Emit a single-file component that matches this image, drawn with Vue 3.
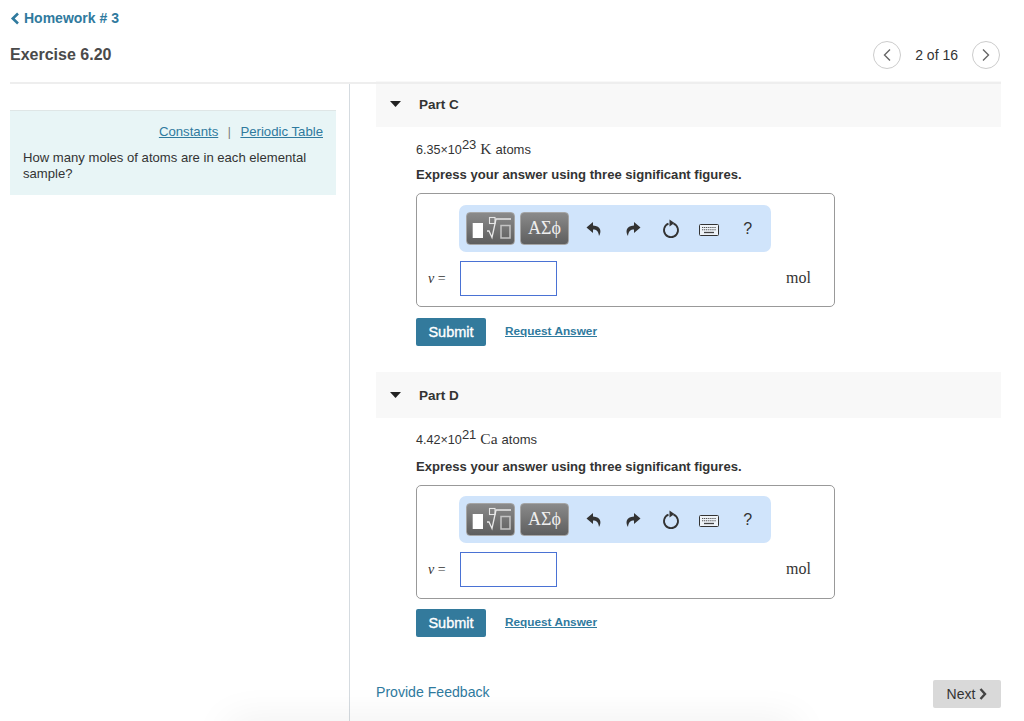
<script setup>
const parts = [
  { name: 'Part C', mantissa: '6.35×10', exp: '23', el: 'K' },
  { name: 'Part D', mantissa: '4.42×10', exp: '21', el: 'Ca' },
]
</script>

<template>
  <div class="page">
    <header class="head">
      <a class="back">
        <svg width="10" height="13" viewBox="0 0 10 13"><path d="M8 1.500 2.800 6.500 8 11.500" fill="none" stroke="#2f7a9e" stroke-width="2.600"/></svg>
        Homework # 3
      </a>
      <div class="title-row">
        <h1>Exercise 6.20</h1>
        <div class="pager">
          <span class="circle"><svg width="10" height="14" viewBox="0 0 10 14"><path d="M8 1.500 2.500 7 8 12.500" fill="none" stroke="#666" stroke-width="1.400"/></svg></span>
          <span class="count">2 of 16</span>
          <span class="circle"><svg width="10" height="14" viewBox="0 0 10 14"><path d="M2 1.500 7.500 7 2 12.500" fill="none" stroke="#666" stroke-width="1.400"/></svg></span>
        </div>
      </div>
    </header>

    <div class="body">
      <aside class="left">
        <div class="info">
          <div class="links"><a>Constants</a><i>|</i><a>Periodic Table</a></div>
          <p>How many moles of atoms are in each elemental sample?</p>
        </div>
      </aside>

      <main class="right">
        <section v-for="p in parts" :key="p.name" class="part">
          <div class="bar">
            <svg class="caret" width="11" height="6" viewBox="0 0 11 6"><path d="M0 0h11L5.500 6z" fill="#222"/></svg>
            <span>{{ p.name }}</span>
          </div>
          <p class="sample"><span class="man">{{ p.mantissa }}</span><sup>{{ p.exp }}</sup><span class="serif">{{ p.el }}</span>atoms</p>
          <p class="ask">Express your answer using three significant figures.</p>

          <div class="answer">
            <div class="toolbar">
              <span class="tb tb-math">
                <svg width="47" height="31" viewBox="0 0 47 31">
                  <rect x="5.700" y="10" width="10.300" height="15" fill="#fff"/>
                  <rect x="22.500" y="4.500" width="5.500" height="6" fill="none" stroke="#e5e5e5" stroke-width="1.100"/>
                  <path d="M20 18h2l3 6.500 4-18.500h15" fill="none" stroke="#e8e8e8" stroke-width="1.300"/>
                  <rect x="34" y="12.500" width="9" height="12.500" fill="none" stroke="#c4c4c4" stroke-width="1.500"/>
                </svg>
              </span>
              <span class="tb tb-greek">ΑΣϕ</span>
              <span class="tool undo"><svg width="16" height="16" viewBox="0 0 16 16"><path d="M7 1 .5 6.500 7 12V8.500c3.500 0 5.500 1.500 6 6.500 2.500-4 2.500-10-6-10.500z" fill="#333"/></svg></span>
              <span class="tool redo"><svg width="16" height="16" viewBox="0 0 16 16"><path d="M9 1l6.500 5.500L9 12V8.500c-3.500 0-5.500 1.500-6 6.500C.5 11 .5 5 9 4.500z" fill="#333"/></svg></span>
              <span class="tool reset"><svg width="18" height="20" viewBox="0 0 18 20"><path d="M11.500 4.600a7 7 0 1 1-5 0" fill="none" stroke="#333" stroke-width="1.800"/><path d="M7.500 0.500v7l5-3.500z" fill="#333"/></svg></span>
              <span class="tool kbd"><svg width="20" height="12" viewBox="0 0 20 12"><rect x=".5" y=".5" width="19" height="11" rx="1" fill="#eef3f8" stroke="#333"/><path d="M3 3.500h14M3 5.800h14" stroke="#555" stroke-width="1.100" stroke-dasharray="1.200 .7"/><path d="M5 8.500h10" stroke="#444" stroke-width="1.300"/></svg></span>
              <span class="tool help">?</span>
            </div>
            <div class="entry">
              <span class="var"><em>ν</em> =</span>
              <span class="field"></span>
              <span class="unit">mol</span>
            </div>
          </div>

          <div class="actions">
            <button class="submit">Submit</button>
            <a class="req">Request Answer</a>
          </div>
        </section>

        <footer class="foot">
          <a class="feedback">Provide Feedback</a>
          <button class="next">Next
            <svg width="8" height="12" viewBox="0 0 8 12"><path d="M1.500 1 6 6l-4.500 5" fill="none" stroke="#444" stroke-width="2.400"/></svg>
          </button>
        </footer>
      </main>
    </div>
    <div class="glow"></div>
  </div>
</template>

<style>
html, body { margin: 0; background: #fff; }
</style>

<style scoped>
.page {
  position: relative;
  width: 1024px;
  height: 721px;
  overflow: hidden;
  box-sizing: border-box;
  padding: 0 23px 0 10px;
  font-family: "Liberation Sans", Arial, sans-serif;
  color: #333;
  background: #fff;
}
.head { position: relative; z-index: 1; height: 82px; border-bottom: 2px solid #eee; box-sizing: content-box; }
.back {
  display: flex;
  align-items: center;
  gap: 4px;
  height: 36px;
  font-size: 14px;
  font-weight: 700;
  color: #2f7a9e;
}
.title-row { display: flex; justify-content: space-between; align-items: center; height: 38px; }
h1 { margin: 0; font-size: 16px; font-weight: 700; color: #4a4a4a; }
.pager { display: flex; align-items: center; gap: 14px; padding-right: 1px; }
.circle {
  width: 26px; height: 26px; border: 1px solid #ccc; border-radius: 50%;
  display: flex; align-items: center; justify-content: center;
}
.count { font-size: 14px; color: #333; }
.body { display: flex; height: 637px; }
.left { width: 339px; border-right: 1px solid #d5dbe0; flex: none; padding-top: 26px; box-sizing: content-box; }
.info {
  width: 326px; height: 85px; box-sizing: border-box;
  background: #e8f5f6; border-top: 1px solid #dfe6e6;
  padding: 13px 13px;
  font-size: 13.100px; line-height: 16px; color: #333;
}
.links { display: flex; justify-content: flex-end; gap: 9.500px; color: #2f7a9e; font-size: 13.200px; margin-bottom: 10px; }
.links a { text-decoration: underline; }
.links i { font-style: normal; color: #777; font-size: 12px; }
.info p { margin: 0; }
.right { flex: 1; padding-left: 26px; margin-top: -3px; }
.part { height: 291px; }
.bar {
  display: flex; align-items: center; height: 46px;
  background: #f8f8f8; font-size: 13.500px; font-weight: 700; color: #333;
}
.caret { margin: 0 18px 0 14px; }
.sample { margin: 13px 0 0 40px; font-size: 13px; line-height: 18px; color: #333; }
.man { font-size: 12.600px; }
.sample sup { font-size: 13px; line-height: 0; vertical-align: 5px; }
.serif { font-family: "Liberation Serif", serif; font-size: 15.500px; margin: 0 4px; }
.ask { margin: 7px 0 0 40px; font-size: 13.080px; font-weight: 700; line-height: 18px; color: #333; }
.answer {
  margin: 9px 0 0 40px;
  width: 419px; height: 114px; box-sizing: border-box;
  border: 1px solid #999; border-radius: 5px;
  padding: 11px 0 0 42px;
}
.part + .part .sample { margin-top: 12px; }
.part + .part .ask { margin-top: 9px; }
.part + .part .answer { padding-top: 10px; }
.part + .part .actions { margin-top: 10px; }
.toolbar {
  display: flex; align-items: center;
  width: 312px; height: 47px; box-sizing: border-box;
  background: #d0e4fb; border-radius: 7px; padding-left: 7px;
}
.tb {
  display: flex; align-items: center; justify-content: center;
  width: 49px; height: 33px; box-sizing: border-box; border-radius: 4px;
  background: linear-gradient(#8a8a8a, #5e5e5e);
  border: 1px solid #a5a5a5;
}
.tb-greek { margin-left: 5px; color: #eee; font: 18px "Liberation Serif", serif; }
.tool { display: flex; align-items: center; justify-content: center; width: 38.400px; height: 33px; }
.undo { margin-left: 6px; }
.kbd svg { margin-top: 2px; }
.help { font-size: 16px; color: #333; }
.entry { display: flex; align-items: center; margin-top: 9px; margin-left: -42px; }
.var { width: 43px; box-sizing: border-box; padding-left: 11px; font: 14px "Liberation Serif", serif; color: #333; }
.field { width: 97px; height: 35px; box-sizing: border-box; border: 1px solid #4a72d4; background: #fff; }
.unit { margin-left: 229px; font: 16px "Liberation Serif", serif; color: #333; position: relative; top: -1px; }
.actions { display: flex; align-items: center; margin: 11px 0 0 40px; }
.submit {
  width: 70px; height: 28px; padding: 0; border: 0; border-radius: 2px;
  background: #337a9c; color: #fff; font: 14.500px "Liberation Sans", sans-serif;
  -webkit-text-stroke: .35px #fff;
}
.req { margin: 0 0 2px 19px; font-size: 11.800px; font-weight: 700; color: #2f7a9e; text-decoration: underline; }
.foot { display: flex; justify-content: space-between; align-items: center; margin-top: 17px; }
.feedback { font-size: 14.100px; color: #2f7a9e; margin-bottom: 4px; }
.next {
  display: flex; align-items: center; justify-content: center; gap: 4px;
  width: 68px; height: 28px; padding: 0; border: 0; border-radius: 2px;
  background: #d9d9d9; color: #333; font: 14px "Liberation Sans", sans-serif;
}
.glow {
  position: absolute; left: 240px; right: 240px; bottom: -22px; height: 10px;
  box-shadow: 0 0 40px 12px rgba(0,0,0,.07);
  pointer-events: none;
}
</style>
